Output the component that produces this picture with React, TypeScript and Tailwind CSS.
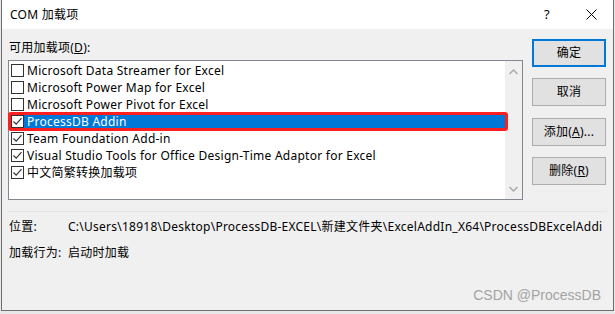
const font = { fontFamily: '"Segoe UI", "Noto Sans", "Noto Sans CJK SC", sans-serif' };

function Check({ checked }: { checked: boolean }) {
  return (
    <div className="w-[13px] h-[13px] border border-[#333333] bg-white flex items-center justify-center shrink-0">
      {checked && (
        <svg width="11" height="11" viewBox="0 0 11 11">
          <path d="M1.5 5.5 L4.2 8.2 L9.5 2.2" fill="none" stroke="#333333" strokeWidth="1.2" />
        </svg>
      )}
    </div>
  );
}

const items = [
  { label: "Microsoft Data Streamer for Excel", checked: false },
  { label: "Microsoft Power Map for Excel", checked: false },
  { label: "Microsoft Power Pivot for Excel", checked: false },
  { label: "ProcessDB Addin", checked: true, selected: true },
  { label: "Team Foundation Add-in", checked: true },
  { label: "Visual Studio Tools for Office Design-Time Adaptor for Excel", checked: true },
  { label: "中文简繁转换加载项", checked: true },
];

function Btn({ children, primary }: { children: React.ReactNode; primary?: boolean }) {
  return (
    <div
      className={
        "w-[74px] h-[28px] bg-[#e1e1e1] flex items-center justify-center text-[12px] text-black " +
        (primary ? "border-2 border-[#0078d7]" : "border border-[#adadad]")
      }
    >
      {children}
    </div>
  );
}

export default function App() {
  return (
    <div className="w-[615px] h-[314px] bg-[#e8e8e8] overflow-hidden tracking-[0.25px]" style={font}>
      <div className="relative ml-[1px] w-[613px] h-[311px] border-x border-b border-[#6e6e6e] bg-[#f0f0f0] flex flex-col">
        {/* title bar */}
        <div className="h-[29px] bg-white flex items-center pl-[8px] shrink-0">
          <span className="text-[12px] text-black">COM 加载项</span>
          <span className="ml-auto text-[13px] text-black">?</span>
          <svg className="ml-[36px] mr-[16px]" width="11" height="11" viewBox="0 0 11 11">
            <path d="M0.5 0.5 L10.5 10.5 M10.5 0.5 L0.5 10.5" stroke="#000" strokeWidth="1" />
          </svg>
        </div>

        {/* body */}
        <div className="flex pt-[10px] pl-[6px]">
          <div className="w-[515px] flex flex-col">
            <div className="h-[18px] leading-[18px] text-[12px] text-black pl-[1px]">
              可用加载项(<span className="underline">D</span>):
            </div>
            <div className="mt-[3px] h-[140px] border border-[#828790] bg-white flex">
              <div className="flex-1 pt-[1px] pl-[1px]">
                {items.map((it) => (
                  <div
                    key={it.label}
                    className={
                      "h-[17px] flex items-center gap-[3px] pl-[1px] text-[12px] whitespace-nowrap " +
                      (it.selected ? "bg-[#0078d7] text-white" : "text-black")
                    }
                  >
                    <Check checked={it.checked} />
                    <span>{it.label}</span>
                  </div>
                ))}
              </div>
              <div className="w-[17px] bg-[#f0f0f0] flex flex-col items-center justify-between pt-[8px] pb-[7px]">
                <svg width="9" height="6" viewBox="0 0 9 6">
                  <path d="M0.5 5 L4.5 1 L8.5 5" fill="none" stroke="#a8a8a8" strokeWidth="1.4" />
                </svg>
                <svg width="9" height="6" viewBox="0 0 9 6">
                  <path d="M0.5 1 L4.5 5 L8.5 1" fill="none" stroke="#a8a8a8" strokeWidth="1.4" />
                </svg>
              </div>
            </div>
          </div>

          <div className="ml-[9px] flex flex-col">
            <Btn primary>确定</Btn>
            <div className="mt-[11px]">
              <Btn>取消</Btn>
            </div>
            <div className="mt-[12px]">
              <Btn>
                添加(<span className="underline">A</span>)...
              </Btn>
            </div>
            <div className="mt-[11px]">
              <Btn>
                删除(<span className="underline">R</span>)
              </Btn>
            </div>
          </div>
        </div>

        {/* separator */}
        <div className="mt-[11px] mx-[6px] h-px bg-[#e3e3e3]" />

        {/* info */}
        <div className="pl-[7px] pt-[6px] text-[12px] text-black">
          <div className="flex h-[18px] items-center">
            <span className="w-[59px] shrink-0">位置:</span>
            <span className="whitespace-nowrap overflow-hidden">
              C:\Users\18918\Desktop\ProcessDB-EXCEL\新建文件夹\ExcelAddIn_X64\ProcessDBExcelAddi
            </span>
          </div>
          <div className="flex h-[18px] items-center mt-[8px]">
            <span className="w-[59px] shrink-0">加载行为:</span>
            <span>启动时加载</span>
          </div>
        </div>

        {/* annotation around selected row */}
        <div className="absolute left-[6px] top-[112px] w-[500px] h-[19px] border-[3px] border-[#ff1f1f] rounded-[3px]" />

        {/* watermark */}
        <div
          className="absolute right-[12px] bottom-[4px] text-[14px] tracking-normal text-[#a3a3a3]"
          style={{ fontFamily: '"Liberation Sans", Arial, sans-serif' }}
        >
          CSDN @ProcessDB
        </div>
      </div>
    </div>
  );
}
